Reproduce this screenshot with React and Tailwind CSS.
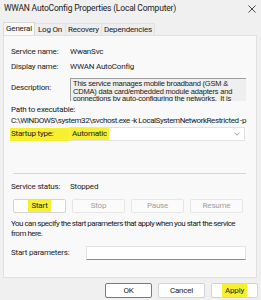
export default function App() {
  const f = { fontFamily: 'Roboto, "Liberation Sans", sans-serif' };
  const ms = { fontFamily: '"Liberation Sans", Arial, sans-serif' };
  return (
    <div className="w-[261px] h-[300px] bg-[#f0f0f0] text-[8px] tracking-[-0.2px] text-[#1a1a1a] overflow-hidden leading-none" style={f}>
      {/* title */}
      <div className="h-[17px] flex items-center justify-between pl-[4px] pr-[5px] text-[8.5px]">
        <span>WWAN AutoConfig Properties (Local Computer)</span>
        <svg width="8" height="8" viewBox="0 0 8 8"><path d="M0.5 0.5l7 7M7.5 0.5l-7 7" stroke="#333" strokeWidth="0.9" /></svg>
      </div>
      {/* tabs */}
      <div className="mt-[5px] ml-[3px] flex items-end h-[13px]">
        <div className="w-[32px] h-[13px] bg-[#f9f9f9] border border-b-0 border-[#d8d8d8] flex items-center justify-center">General</div>
        <div className="w-[31px] h-[12px] border-t border-r border-[#e2e2e2] bg-[#eeeeee] flex items-center justify-center">Log On</div>
        <div className="w-[36px] h-[12px] border-t border-r border-[#e2e2e2] bg-[#eeeeee] flex items-center justify-center">Recovery</div>
        <div className="w-[53px] h-[12px] border-t border-r border-[#e2e2e2] bg-[#eeeeee] flex items-center justify-center">Dependencies</div>
      </div>
      {/* panel */}
      <div className="ml-[3px] w-[254px] h-[243px] bg-[#f9f9f9] border border-[#e0e0e0] pl-[7px] pr-[10px] pt-[11px]">
        <div className="flex items-center h-[10px]"><span className="w-[59px] shrink-0">Service name:</span><span>WwanSvc</span></div>
        <div className="flex items-center h-[10px] mt-[5px]"><span className="w-[59px] shrink-0">Display name:</span><span>WWAN AutoConfig</span></div>
        <div className="flex mt-[6px]">
          <span className="w-[59px] shrink-0 mt-[6px]">Description:</span>
          <div className="w-[176px] h-[23px] border-t border-l border-[#a0a0a0] bg-[#efefef] overflow-hidden pl-[2px] pt-[1px] text-[7.5px] leading-[7.5px] tracking-[-0.2px] whitespace-nowrap" style={ms}>
            <div>This service manages mobile broadband (GSM &amp;</div>
            <div>CDMA) data card/embedded module adapters and</div>
            <div>connections by auto-configuring the networks.&nbsp; It is</div>
          </div>
        </div>
        <div className="mt-[4px] h-[10px] flex items-center">Path to executable:</div>
        <div className="mt-[1px] h-[10px] flex items-center whitespace-nowrap tracking-[-0.42px]">C:\WINDOWS\system32\svchost.exe -k LocalSystemNetworkRestricted -p</div>
        <div className="flex items-center mt-[1px] h-[14px]">
          <span className="w-[59px] shrink-0 h-[13px] bg-[#f7f032] flex items-center pl-[1px] -ml-[1px]">Startup type:</span>
          <div className="w-[176px] h-[14px] bg-white border border-[#e2e2e2] flex items-center justify-between pr-[4px]">
            <span className="bg-[#f7f032] h-full flex items-center px-[2px]">Automatic</span>
            <svg width="6" height="4" viewBox="0 0 6 4"><path d="M0.5 0.8l2.5 2.4 2.5-2.4" stroke="#777" fill="none" strokeWidth="0.7"/></svg>
          </div>
        </div>
        <div className="h-[1px] bg-[#d6d6d6] mt-[32px] w-[233px] ml-[2px]" />
        <div className="flex items-center h-[10px] mt-[8px]"><span className="w-[59px] shrink-0">Service status:</span><span>Stopped</span></div>
        <div className="flex gap-[6px] mt-[7px] ml-[2px]">
          <div className="w-[53px] h-[14px] bg-white border border-[#d3d3d3] rounded-[2px] flex items-center justify-center"><span className="bg-[#f7f032] px-[3px] h-[12px] flex items-center">Start</span></div>
          <div className="w-[53px] h-[14px] bg-[#fbfbfb] border border-[#e6e6e6] rounded-[2px] flex items-center justify-center text-[#a0a0a0]">Stop</div>
          <div className="w-[53px] h-[14px] bg-[#fbfbfb] border border-[#e6e6e6] rounded-[2px] flex items-center justify-center text-[#a0a0a0]">Pause</div>
          <div className="w-[53px] h-[14px] bg-[#fbfbfb] border border-[#e6e6e6] rounded-[2px] flex items-center justify-center text-[#a0a0a0]">Resume</div>
        </div>
        <div className="mt-[6px] leading-[10px] whitespace-nowrap tracking-[-0.52px]">
          <div>You can specify the start parameters that apply when you start the service</div>
          <div>from here.</div>
        </div>
        <div className="flex items-center mt-[7px]">
          <span className="w-[75px] shrink-0">Start parameters:</span>
          <div className="w-[162px] h-[14px] bg-white border border-[#e2e2e2] border-b-[#8a8a8a]" />
        </div>
      </div>
      <div className="flex justify-end gap-[6px] pr-[3px] mt-[5px]">
        <div className="w-[47px] h-[15px] bg-white border border-[#5b7fae] rounded-[2px] flex items-center justify-center">OK</div>
        <div className="w-[47px] h-[15px] bg-white border border-[#d3d3d3] rounded-[2px] flex items-center justify-center">Cancel</div>
        <div className="w-[47px] h-[15px] bg-white border border-[#d3d3d3] rounded-[2px] flex items-center justify-center"><span className="bg-[#f7f032] px-[3px] h-[13px] flex items-center">Apply</span></div>
      </div>
    </div>
  );
}
